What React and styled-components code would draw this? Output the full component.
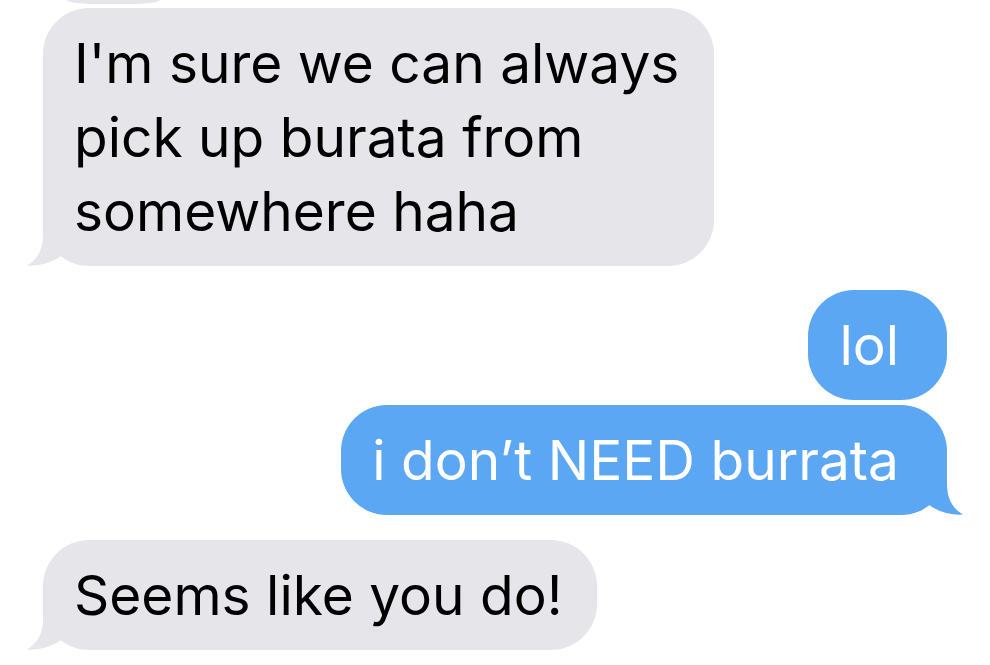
import React from 'react'
import styled, { createGlobalStyle } from 'styled-components'

const Global = createGlobalStyle`
  html, body {
    margin: 0;
    padding: 0;
    background: #ffffff;
  }
  body {
    font-family: Inter, "Liberation Sans", sans-serif;
    -webkit-font-smoothing: antialiased;
  }
`

const GRAY = '#e5e5ea'
const BLUE = '#5ea9f5'

const Thread = styled.div`
  display: flex;
  flex-direction: column;
  padding: 0 43px;
  width: 990px;
  height: 665px;
  box-sizing: border-box;
  overflow: hidden;
`

const PrevTail = styled.div`
  margin-left: 24px;
  width: 93px;
  height: 4px;
  background: ${GRAY};
  border-bottom-left-radius: 30px 4px;
  border-bottom-right-radius: 30px 4px;
`

const Row = styled.div`
  display: flex;
  justify-content: ${p => (p.$me ? 'flex-end' : 'flex-start')};
  margin-top: ${p => p.$gap}px;
`

const Bubble = styled.div`
  position: relative;
  box-sizing: border-box;
  max-width: 671px;
  padding: ${p => (p.$me ? '18px 48px 18px 31px' : '18px 34px 18px 31px')};
  border-radius: 46px;
  background: ${p => (p.$me ? BLUE : GRAY)};
  background-image: ${p =>
    p.$me ? 'linear-gradient(180deg, #64aef5 0px, #5ba7f4 220px)' : 'none'};
  background-attachment: ${p => (p.$me ? 'fixed' : 'scroll')};
  color: ${p => (p.$me ? '#ffffff' : '#000000')};
  font-size: 55px;
  line-height: 74px;
  letter-spacing: 0px;
  white-space: pre-wrap;
`

const TailSvg = styled.svg`
  position: absolute;
  bottom: 0;
  width: 50px;
  height: 45px;
  ${p => (p.$me ? 'right: -16px; transform: scaleX(-1);' : 'left: -16px;')}
`

const Tail = ({ me }) => (
  <TailSvg $me={me} viewBox="0 0 50 45">
    <path
      d="M16 0 L16 14 C16 28 11 38 0 44.6 C12 45.4 24 42 34 35 L50 26 L50 0 Z"
      fill={me ? '#5ba7f4' : GRAY}
    />
  </TailSvg>
)

const messages = [
  { me: false, gap: 4, tail: true, text: "I'm sure we can always pick up burata from somewhere haha" },
  { me: true, gap: 24, tail: false, text: 'lol' },
  { me: true, gap: 5, tail: true, text: 'i don\u2019t NEED burrata' },
  { me: false, gap: 25, tail: true, text: 'Seems like you do!' },
]

export default function App() {
  return (
    <>
      <Global />
      <Thread>
        <PrevTail />
        {messages.map((m, i) => (
          <Row key={i} $me={m.me} $gap={m.gap}>
            <Bubble $me={m.me}>
              {m.tail && <Tail me={m.me} />}
              {m.text}
            </Bubble>
          </Row>
        ))}
      </Thread>
    </>
  )
}
